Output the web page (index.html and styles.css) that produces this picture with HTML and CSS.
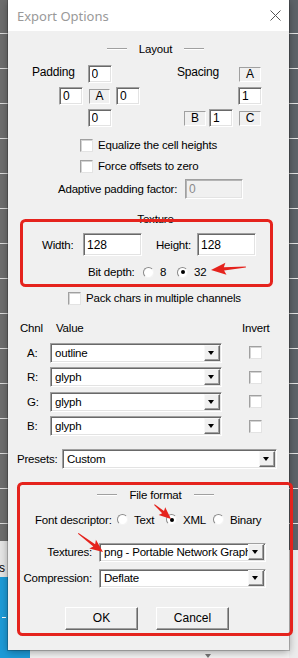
FILE: index.html
```html
<!DOCTYPE html>
<html lang="en">
<head>
  <meta charset="UTF-8">
  <meta name="viewport" content="width=device-width, initial-scale=1.0">
  <title>Export Options</title>
  <link rel="stylesheet" href="styles.css">
</head>
<body>
  <div class="screen">
    <div class="desk-left">
      <div class="sheet"></div>
      <div class="sheet-end">s</div>
      <div class="taskbar"><span class="task-dash"></span></div>
    </div>

    <div class="middle">
      <div class="dialog">
        <div class="titlebar">
          <span class="title">Export Options</span>
          <svg class="close" width="11" height="11" viewBox="0 0 11 11"><path d="M0.5 0.5 L10.5 10.5 M10.5 0.5 L0.5 10.5" stroke="#555" stroke-width="1"/></svg>
        </div>

        <div class="group-title layout-title"><span class="etch"></span>Layout<span class="etch"></span></div>

        <div class="layout-grids">
          <div class="pad-grid">
            <span class="grid-label">Padding</span>
            <input class="field pad-top" value="0">
            <input class="field pad-left" value="0">
            <span class="tag pad-a">A</span>
            <input class="field pad-right" value="0">
            <input class="field pad-bottom" value="0">
          </div>
          <div class="space-grid">
            <span class="grid-label">Spacing</span>
            <span class="tag sp-a">A</span>
            <input class="field sp-a-val" value="1">
            <span class="tag sp-b">B</span>
            <input class="field sp-b-val" value="1">
            <span class="tag sp-c">C</span>
          </div>
        </div>

        <label class="check-row equalize"><span class="check"></span>Equalize the cell heights</label>
        <label class="check-row force"><span class="check"></span>Force offsets to zero</label>

        <div class="adaptive">
          <span>Adaptive padding factor:</span>
          <input class="field disabled" value="0" disabled>
        </div>

        <div class="group-title texture-title">Texture</div>

        <div class="size-row">
          <span class="size-label">Width:</span>
          <input class="field size-field" value="128">
          <span class="size-label height-label">Height:</span>
          <input class="field size-field" value="128">
        </div>

        <div class="bit-row">
          <span class="bit-label">Bit depth:</span>
          <label class="radio-opt bit-8"><span class="radio"></span>8</label>
          <label class="radio-opt"><span class="radio on"></span>32</label>
        </div>

        <label class="check-row pack"><span class="check"></span>Pack chars in multiple channels</label>

        <div class="channels">
          <span class="ch-head">Chnl</span>
          <span class="ch-head value-head">Value</span>
          <span class="ch-head">Invert</span>

          <span class="ch-name">A:</span>
          <div class="combo ch-combo"><span class="combo-text">outline</span><span class="combo-btn"></span></div>
          <span class="check ch-check"></span>

          <span class="ch-name">R:</span>
          <div class="combo ch-combo"><span class="combo-text">glyph</span><span class="combo-btn"></span></div>
          <span class="check ch-check"></span>

          <span class="ch-name">G:</span>
          <div class="combo ch-combo"><span class="combo-text">glyph</span><span class="combo-btn"></span></div>
          <span class="check ch-check"></span>

          <span class="ch-name">B:</span>
          <div class="combo ch-combo"><span class="combo-text">glyph</span><span class="combo-btn"></span></div>
          <span class="check ch-check"></span>
        </div>

        <div class="presets">
          <span class="presets-label">Presets:</span>
          <div class="combo presets-combo"><span class="combo-text">Custom</span><span class="combo-btn"></span></div>
        </div>

        <div class="group-title file-title"><span class="etch"></span>File format<span class="etch"></span></div>

        <div class="fd-row">
          <span class="fd-label">Font descriptor:</span>
          <label class="radio-opt fd-text"><span class="radio"></span>Text</label>
          <label class="radio-opt fd-xml"><span class="radio on"></span>XML</label>
          <label class="radio-opt"><span class="radio"></span>Binary</label>
        </div>

        <div class="out-grid">
          <span class="out-label">Textures:</span>
          <div class="combo"><span class="combo-text">png - Portable Network Graphic</span><span class="combo-btn"></span></div>
          <span class="out-label">Compression:</span>
          <div class="combo"><span class="combo-text">Deflate</span><span class="combo-btn"></span></div>
        </div>

        <div class="buttons">
          <button class="btn">OK</button>
          <button class="btn">Cancel</button>
        </div>
      </div>
      <div class="below"><span class="below-arrow"></span></div>
    </div>

    <div class="desk-right"></div>

    <!-- red annotation marks drawn over the screenshot -->
    <svg class="marks" width="298" height="658" viewBox="0 0 298 658">
      <rect x="21.5" y="220.5" width="250" height="65" rx="4" fill="none" stroke="#e5231d" stroke-width="3"/>
      <rect x="18.5" y="483.5" width="273" height="151" rx="4" fill="none" stroke="#e5231d" stroke-width="3"/>
      <path transform="translate(211 270) rotate(-5)" d="M0 0 L15 -6 L13 -1.6 L35 -0.5 L35 0.5 L13 1.6 L15 6 Z" fill="#e5231d"/>
      <path transform="translate(171 519) rotate(221)" d="M0 0 L12 -5 L10.5 -1.4 L22 -0.5 L22 0.5 L10.5 1.4 L12 5 Z" fill="#e5231d"/>
      <path transform="translate(103 552) rotate(217)" d="M0 0 L13 -5.5 L11 -1.5 L31 -0.5 L31 0.5 L11 1.5 L13 5.5 Z" fill="#e5231d"/>
    </svg>
  </div>
</body>
</html>
```

FILE: styles.css
```css
body {
  margin: 0;
  font-family: "Liberation Sans", Arial, sans-serif;
  font-size: 11.5px;
  letter-spacing: -0.2px;
  color: #000;
  white-space: nowrap;
}

.screen {
  position: relative;
  display: flex;
  width: 298px;
  height: 658px;
  overflow: hidden;
  background: #f0f0f0;
}

/* desktop behind the dialog */
.desk-left {
  width: 8px;
  display: flex;
  flex-direction: column;
}

.sheet {
  height: 541px;
  background-color: #6e6e6e;
  background-image: repeating-linear-gradient(to bottom, transparent 0 33px, #dcdcdc 33px 34px, transparent 34px 35px);
}

.sheet-end {
  height: 36px;
  box-sizing: border-box;
  padding-top: 20px;
  line-height: 14px;
  font-size: 12px;
  background: #e6e6e6;
  text-indent: -1px;
}

.taskbar {
  flex: 1;
  background: #1d9bd8;
}

.task-dash {
  display: block;
  width: 4px;
  height: 1px;
  margin: 40px 0 0 2px;
  background: #fff;
}

.desk-right {
  width: 9px;
  background-color: #ececec;
  background-image:
    repeating-linear-gradient(to bottom, transparent 0 33px, #e6e6e6 33px 34px, transparent 34px 35px),
    linear-gradient(#5e6369, #5e6369);
  background-size: 100% 550px, 100% 550px;
  background-repeat: no-repeat;
}

.middle {
  width: 281px;
  display: flex;
  flex-direction: column;
}

.below {
  flex: 1;
  background: linear-gradient(to right, #1d9bd8 22px, #f3f3f3 22px);
}

.below-arrow {
  display: block;
  width: 0;
  height: 0;
  margin: 4px 0 0 197px;
  border-left: 3px solid transparent;
  border-right: 3px solid transparent;
  border-top: 4px solid #777;
}

/* dialog */
.dialog {
  position: relative;
  z-index: 1;
  height: 650px;
  background: #f0f0f0;
  box-shadow: 0 0 0 1px rgba(0, 0, 0, 0.2), 0 2px 8px rgba(0, 0, 0, 0.35);
}

.titlebar {
  height: 31px;
  display: flex;
  align-items: center;
  justify-content: space-between;
  padding: 0 8px 0 9px;
  background: #fff;
}

.title {
  font-family: "Noto Sans", sans-serif;
  font-size: 13px;
  letter-spacing: 0;
  color: #999;
}

.group-title {
  display: flex;
  justify-content: center;
  align-items: center;
  gap: 12px;
  height: 14px;
  line-height: 14px;
  padding-left: 14px;
}

.etch {
  width: 20px;
  height: 2px;
  box-sizing: border-box;
  border-top: 1px solid #a0a0a0;
  border-bottom: 1px solid #fff;
}

.layout-title { margin-top: 11px; }
.texture-title { margin-top: 13px; }
.file-title { margin-top: 19px; }

/* sunken edit box */
.field {
  box-sizing: border-box;
  margin: 0;
  padding: 0 3px;
  font: inherit;
  font-size: 12px;
  color: #000;
  background: #fff;
  border: 1px solid;
  border-color: #a0a0a0 #fff #fff #a0a0a0;
  box-shadow: inset 1px 1px 0 #696969, inset -1px -1px 0 #e3e3e3;
  outline: none;
}

.field.disabled {
  background: #f0f0f0;
  color: #8a8a8a;
  box-shadow: inset 1px 1px 0 #b4b4b4, inset -1px -1px 0 #e3e3e3;
}

.tag {
  box-sizing: border-box;
  height: 15px;
  line-height: 13px;
  font-size: 12px;
  text-align: center;
  border: 1px solid;
  border-color: #a0a0a0 #fff #fff #a0a0a0;
  align-self: center;
}

/* padding / spacing */
.layout-grids {
  display: flex;
  gap: 37px;
  margin: 9px 0 0 24px;
}

.pad-grid,
.space-grid {
  display: grid;
  grid-template-rows: repeat(3, 18px);
  row-gap: 4px;
}

.pad-grid {
  grid-template-columns: 22.5px 24px 24px 24px;
  column-gap: 4.5px;
}

.space-grid {
  grid-template-columns: 32px 29px 24px;
}

.grid-label {
  grid-row: 1;
  grid-column: 1 / 3;
  line-height: 14px;
  font-size: 12px;
}

.pad-grid .field,
.space-grid .field {
  width: 24px;
  height: 18px;
}

.pad-top { grid-row: 1; grid-column: 3; }
.pad-left { grid-row: 2; grid-column: 2; }
.pad-a { grid-row: 2; grid-column: 3; width: 21px; justify-self: center; }
.pad-right { grid-row: 2; grid-column: 4; }
.pad-bottom { grid-row: 3; grid-column: 3; }

.sp-a { grid-row: 1; grid-column: 3; width: 22px; margin-left: 1px; }
.sp-a-val { grid-row: 2; grid-column: 3; }
.sp-b { grid-row: 3; grid-column: 1; width: 22px; justify-self: end; margin-right: 3px; }
.sp-b-val { grid-row: 3; grid-column: 2; }
.sp-c { grid-row: 3; grid-column: 3; width: 22px; margin-left: 1px; }

/* check boxes and radios */
.check-row {
  display: flex;
  align-items: center;
  gap: 5px;
  height: 14px;
}

.check {
  box-sizing: border-box;
  width: 13px;
  height: 13px;
  background: #fff;
  border: 1px solid;
  border-color: #a0a0a0 #e3e3e3 #e3e3e3 #a0a0a0;
  box-shadow: inset 1px 1px 0 #d4d4d4;
}

.equalize { margin: 11px 0 0 72px; }
.force { margin: 7px 0 0 72px; }
.pack { margin: 12px 0 0 60px; }

.radio-opt {
  display: flex;
  align-items: center;
  gap: 6px;
}

.radio {
  position: relative;
  box-sizing: border-box;
  width: 11px;
  height: 11px;
  border-radius: 50%;
  background: #fff;
  border: 1px solid;
  border-color: #8a8a8a #f4f4f4 #f4f4f4 #8a8a8a;
}

.radio.on::after {
  content: "";
  position: absolute;
  left: 2.5px;
  top: 2.5px;
  width: 4px;
  height: 4px;
  border-radius: 50%;
  background: #000;
}

.adaptive {
  display: grid;
  grid-template-columns: 127px 58px;
  align-items: center;
  margin: 6px 0 0 50px;
}

.adaptive .field { height: 20px; }

/* texture */
.size-row {
  display: flex;
  align-items: center;
  margin: 7px 0 0 34px;
}

.size-label { width: 41px; }
.height-label { margin-left: 14px; }

.size-field {
  width: 59px;
  height: 23px;
}

.bit-row {
  display: flex;
  align-items: center;
  height: 14px;
  margin: 9px 0 0 80px;
}

.bit-label { width: 55px; }
.bit-8 { width: 34px; }

/* channels */
.channels {
  display: grid;
  grid-template-columns: 30px 192px 26px;
  grid-template-rows: 14px repeat(4, 20px);
  row-gap: 4.5px;
  align-items: center;
  margin: 19px 0 0 12px;
}

.ch-head { margin-bottom: 6.5px; }
.value-head { padding-left: 6px; }
.ch-name { padding-left: 7px; }
.ch-combo { width: 172px; }
.ch-check { justify-self: center; }

/* combo box */
.combo {
  box-sizing: border-box;
  display: flex;
  align-items: center;
  height: 20px;
  font-size: 11.5px;
  letter-spacing: -0.2px;
  background: #fff;
  border: 1px solid;
  border-color: #a0a0a0 #fff #fff #a0a0a0;
  box-shadow: inset 1px 1px 0 #696969, inset -1px -1px 0 #e3e3e3;
  padding: 1px;
}

.combo-text {
  flex: 1;
  padding-left: 3px;
  overflow: hidden;
}

.combo-btn {
  position: relative;
  flex: none;
  box-sizing: border-box;
  width: 16px;
  height: 16px;
  background: #f0f0f0;
  border: 1px solid;
  border-color: #f8f8f8 #696969 #696969 #f8f8f8;
  box-shadow: inset -1px -1px 0 #a0a0a0;
}

.combo-btn::after {
  content: "";
  position: absolute;
  left: 3px;
  top: 5px;
  border-left: 3.5px solid transparent;
  border-right: 3.5px solid transparent;
  border-top: 4px solid #000;
}

.presets {
  display: flex;
  align-items: center;
  margin: 13px 0 0 9px;
}

.presets-label { width: 45px; }
.presets-combo { width: 215px; }

/* file format */
.fd-row {
  display: flex;
  align-items: center;
  height: 14px;
  margin: 10.5px 0 0 27px;
}

.fd-label { width: 82px; }
.fd-text { width: 49px; }
.fd-xml { width: 47px; }

.out-grid {
  display: grid;
  grid-template-columns: 75px 167px;
  grid-template-rows: 19px 19px;
  column-gap: 7px;
  row-gap: 7px;
  align-items: center;
  margin: 16px 0 0 9px;
}

.out-grid .combo { height: 19px; }
.out-label { text-align: right; }

.buttons {
  display: flex;
  gap: 18px;
  margin: 19px 0 0 57px;
}

.btn {
  box-sizing: border-box;
  width: 73px;
  height: 23px;
  padding: 0;
  font: inherit;
  font-size: 12px;
  color: #000;
  background: #f0f0f0;
  border: 1px solid;
  border-color: #fff #696969 #696969 #fff;
  box-shadow: inset -1px -1px 0 #a0a0a0;
}

.marks {
  position: absolute;
  left: 0;
  top: 0;
  z-index: 2;
  pointer-events: none;
}
```
